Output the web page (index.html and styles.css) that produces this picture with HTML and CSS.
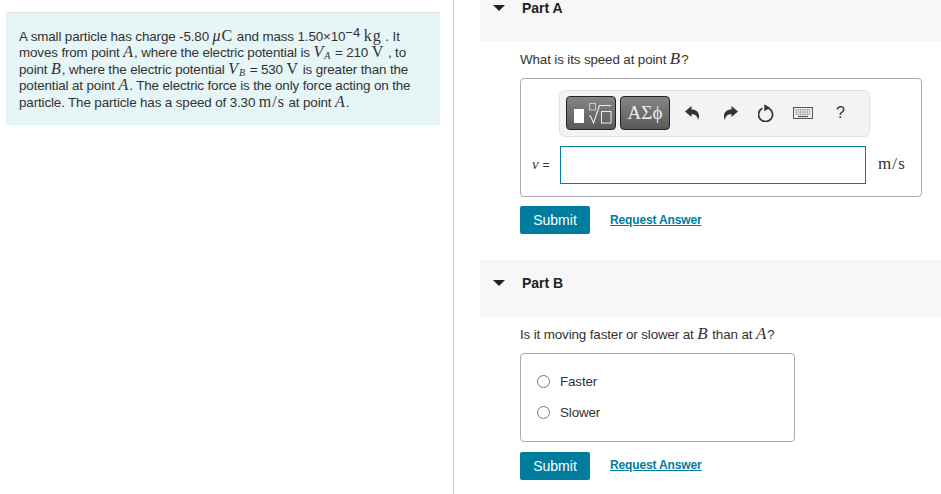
FILE: index.html
```html
<!DOCTYPE html>
<html lang="en">
<head>
<meta charset="utf-8">
<title>Particle problem</title>
<link rel="stylesheet" href="styles.css">
</head>
<body>
<div class="page">
  <aside class="left">
    <div class="intro">
      A small particle has charge -5.80 <span class="m"><i>μ</i>C</span> and mass 1.50×10<sup class="m sup">−4</sup> <span class="m">kg</span> . It<br>
      moves from point <span class="m"><i>A</i></span>, where the electric potential is <span class="m"><i>V<sub>A</sub></i></span> = 210 <span class="m">V</span> , to<br>
      point <span class="m"><i>B</i></span>, where the electric potential <span class="m"><i>V<sub>B</sub></i></span> = 530 <span class="m">V</span> is greater than the<br>
      potential at point <span class="m"><i>A</i></span>. The electric force is the only force acting on the<br>
      particle. The particle has a speed of 3.30 <span class="m">m/s</span> at point <span class="m"><i>A</i></span>.
    </div>
  </aside>
  <main class="right">
    <section class="part">
      <header class="part-head head-a"><span class="caret"></span><h2>Part A</h2></header>
      <div class="part-body">
        <p class="question q-a">What is its speed at point <span class="m"><i>B</i></span>?</p>
        <div class="answer-box box-a">
          <div class="toolbar">
            <button class="tool-btn" aria-label="Templates">
              <svg width="42" height="28" viewBox="0 0 42 28">
                <rect x="4" y="10" width="10" height="14" fill="#fff"/>
                <rect x="19.500" y="4.500" width="6" height="6.500" fill="none" stroke="#ccc"/>
                <path d="M19 17h1.500l3 7l6-17.500h11.500" fill="none" stroke="#eee" stroke-width="1.100"/>
                <rect x="31.500" y="12.500" width="9.500" height="11.500" fill="none" stroke="#eee"/>
              </svg>
            </button>
            <button class="tool-btn greek">ΑΣϕ</button>
            <span class="tool-icons">
              <svg class="ic" width="14" height="14" viewBox="0 0 14 14"><path d="M0 5.500L6.500 0V3.500C11 3.500 14 6 14 10C14 11.500 13.700 13 13 14C12.800 10.800 10.500 8 6.500 8V11Z" fill="#333"/></svg>
              <svg class="ic" width="14" height="14" viewBox="0 0 14 14"><path d="M14 5.500L7.500 0V3.500C3 3.500 0 6 0 10C0 11.500 .3 13 1 14C1.200 10.800 3.500 8 7.500 8V11Z" fill="#333"/></svg>
              <svg class="ic" width="17" height="18" viewBox="0 0 17 18"><path d="M10.500 4.200A7 7 0 1 1 4.400 4.300" fill="none" stroke="#333" stroke-width="1.700"/><path d="M6.200 .2L12.200 3.800L6.400 7.200Z" fill="#333"/></svg>
              <svg class="ic" width="20" height="12" viewBox="0 0 20 12"><rect x=".5" y=".5" width="19" height="11" fill="#eee" stroke="#555"/><path d="M2.500 2.800h15M2.500 5h15M2.500 7.200h15" stroke="#777" stroke-dasharray="1.500 .7"/><path d="M5 9.500h10" stroke="#555" stroke-width="1.200"/></svg>
              <span class="help">?</span>
            </span>
          </div>
          <div class="input-row">
            <label class="var" for="v"><span class="m"><i>v</i></span> =</label>
            <input class="field" id="v" type="text">
            <span class="unit m">m/s</span>
          </div>
        </div>
        <div class="actions act-a">
          <button class="submit">Submit</button>
          <a class="req" href="#">Request Answer</a>
        </div>
      </div>
    </section>
    <section class="part">
      <header class="part-head head-b"><span class="caret"></span><h2>Part B</h2></header>
      <div class="part-body">
        <p class="question q-b">Is it moving faster or slower at <span class="m"><i>B</i></span> than at <span class="m"><i>A</i></span>?</p>
        <div class="answer-box box-b">
          <label class="opt"><span class="radio"></span>Faster</label>
          <label class="opt"><span class="radio"></span>Slower</label>
        </div>
        <div class="actions act-b">
          <button class="submit">Submit</button>
          <a class="req req-b" href="#">Request Answer</a>
        </div>
      </div>
    </section>
  </main>
</div>
</body>
</html>
```
FILE: styles.css
```css
* { box-sizing: border-box; }
html, body { margin: 0; padding: 0; height: 100%; overflow: hidden; background: #fff; }
body { font-family: "Liberation Sans", Arial, sans-serif; font-size: 14px; color: #333; }

.page { display: grid; grid-template-columns: 454px 1fr; height: 494px; }

.left { border-right: 1px solid #c7ced6; padding: 12px 13px 0 6px; }
.intro {
  background: #e6f5f6;
  border-top: 1px solid #dfe3e6;
  height: 113px;
  padding: 16px 13px 0;
  font-size: 13.4px;
  line-height: 16.4px;
  white-space: nowrap;
  letter-spacing: -0.13px;
}

.m { font-family: "Liberation Serif", "Times New Roman", serif; font-size: 16px; line-height: 0; letter-spacing: 1px; }
.m sub { font-size: 10px; line-height: 0; vertical-align: -2px; }
.sup { font-size: 13px; font-family: "Liberation Sans", sans-serif; vertical-align: 4px; line-height: 0; letter-spacing: 0; }

.right { padding-left: 26px; }
.part-head { background: #f7f7f7; display: flex; align-items: flex-start; padding-left: 13px; }
.head-a { height: 41px; padding-top: 0; }
.head-b { height: 57px; padding-top: 15px; margin-top: 26px; }
.caret {
  width: 0; height: 0; margin-top: 5px;
  border-left: 6px solid transparent; border-right: 6px solid transparent; border-top: 6px solid #222;
}
h2 { margin: 0 0 0 17px; font-size: 14px; line-height: 16px; font-weight: bold; color: #222; }

.part-body { padding-left: 40px; }
.question { margin: 0; font-size: 13.4px; line-height: 20px; letter-spacing: -0.13px; }
.question .m { font-size: 17px; letter-spacing: 1px; }
.q-a { padding-top: 9px; }
.q-b { padding-top: 8px; }

.answer-box { border: 1px solid #aaa; border-radius: 4px; }
.box-a { width: 402px; height: 119px; margin-top: 8px; padding: 11px 0 0 11px; }
.box-b { width: 275px; height: 89px; margin-top: 8px; padding: 12px 0 0 16px; }

.toolbar {
  margin-left: 27px; width: 311px; height: 47px;
  background: #f3f3f3; border: 1px solid #e2e2e2; border-radius: 6px;
  display: flex; align-items: center; gap: 4px; padding: 0 0 1px 6px;
}
.tool-btn {
  width: 50px; height: 34px; padding: 0;
  border: 1px solid #222; border-radius: 4px;
  background: linear-gradient(#858585, #5a5a5a);
  color: #eee; display: flex; align-items: center; justify-content: center;
}
.greek { font-family: "Liberation Serif", serif; font-size: 19px; }
.tool-icons { display: flex; align-items: center; flex: 1; padding-left: 11px; }
.ic { display: block; flex: none; }
.ic:nth-child(1) { margin-right: 25px; }
.ic:nth-child(2) { margin-right: 20px; }
.ic:nth-child(3) { margin-right: 18px; }
.ic:nth-child(4) { margin-right: 23px; }
.help { font-size: 16px; color: #333; }

.input-row { display: flex; align-items: center; margin-top: 9px; }
.var { width: 28px; font-size: 12px; white-space: nowrap; }
.var .m { font-size: 15px; letter-spacing: 0.6px; }
.field { width: 306px; height: 38px; border: 1px solid #007c9e; background: #fff; padding: 0; outline: 0; }
.unit { margin-left: 12px; font-size: 17px; line-height: 20px; letter-spacing: 1.1px; position: relative; top: -1px; }

.actions { display: flex; align-items: center; gap: 20px; }
.act-a { margin-top: 9px; }
.act-b { margin-top: 10px; }
.submit {
  width: 70px; height: 28px; padding: 0; border: 0; border-radius: 2px;
  background: #007c9e; color: #fff;
  font-family: "Liberation Sans", Arial, sans-serif; font-size: 14px;
}
.req {
  color: #007c9e; font-size: 12px; font-weight: bold; text-decoration: underline;
  letter-spacing: -0.15px;
}
.req-b { position: relative; top: -1px; }

.opt { display: flex; align-items: center; height: 31px; gap: 10px; font-size: 13.4px; line-height: 16px; letter-spacing: -0.13px; }
.radio { width: 13px; height: 13px; border: 1px solid #777; border-radius: 50%; background: #fff; flex: none; }
```
